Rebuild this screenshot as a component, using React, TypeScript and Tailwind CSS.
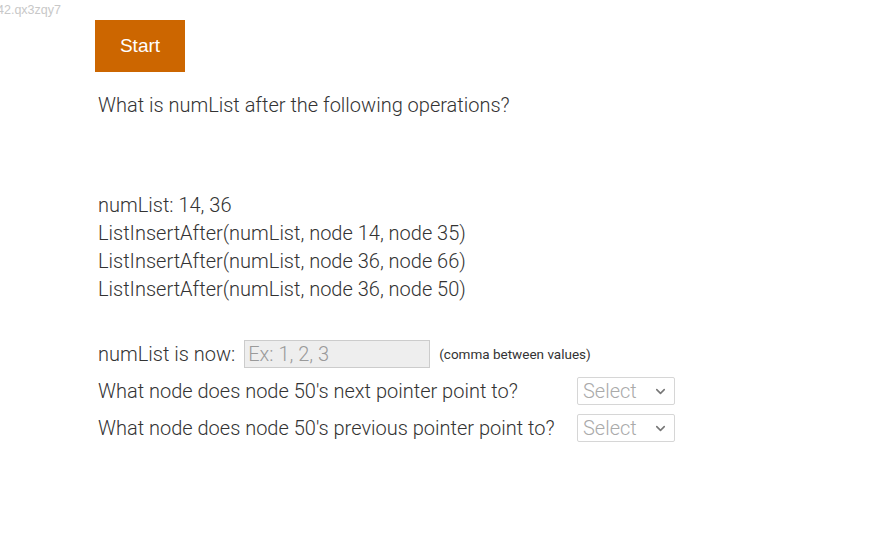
import { ChevronDown } from "lucide-react";

const ops = [
  "numList: 14, 36",
  "ListInsertAfter(numList, node 14, node 35)",
  "ListInsertAfter(numList, node 36, node 66)",
  "ListInsertAfter(numList, node 36, node 50)",
];

function FakeSelect() {
  return (
    <div className="w-[98px] h-[28px] border border-[#d6d6d6] rounded-[2px] bg-white flex items-center justify-between pl-[5px] pr-[6px] text-[#aaaaaa] text-[20px]">
      <span className="leading-none">Select</span>
      <ChevronDown size={15} strokeWidth={2.5} className="text-[#777]" />
    </div>
  );
}

export default function App() {
  return (
    <div className="w-[877px] h-[537px] bg-white relative font-['Roboto',sans-serif] text-[#333] font-light">
      <div className="absolute left-[-3px] top-[1px] text-[12.5px] text-[#c8c8c8] font-['Liberation_Sans',sans-serif] font-normal">
        42.qx3zqy7
      </div>
      <div className="pl-[95px] pt-[20px]">
        <button className="w-[90px] h-[52px] bg-[#cc6600] text-white text-[19px] font-normal font-['Liberation_Sans',sans-serif]">
          Start
        </button>
        <div className="pl-[3px] text-[20px]">
          <p className="mt-[19px] leading-[28px]">What is numList after the following operations?</p>
          <div className="mt-[72px] leading-[28px]">
            {ops.map((o) => (
              <div key={o}>{o}</div>
            ))}
          </div>
          <div className="mt-[36px] flex items-center h-[30px]">
            <span>numList is now:</span>
            <div className="ml-[9px] w-[186px] h-[28px] bg-[#eeeeee] border border-[#cccccc] flex items-center pl-[3px] text-[#9a9a9a]">
              Ex: 1, 2, 3
            </div>
            <span className="ml-[9px] text-[13.5px] font-normal">(comma between values)</span>
          </div>
          <div className="mt-[8px] flex items-center h-[28px]">
            <span className="w-[479px]">What node does node 50's next pointer point to?</span>
            <FakeSelect />
          </div>
          <div className="mt-[9px] flex items-center h-[28px]">
            <span className="w-[479px]">What node does node 50's previous pointer point to?</span>
            <FakeSelect />
          </div>
        </div>
      </div>
    </div>
  );
}
